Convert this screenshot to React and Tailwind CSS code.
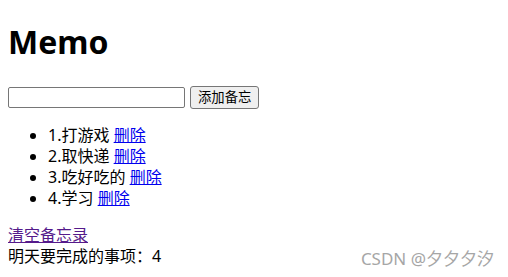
export default function App() {
  const items = ["打游戏", "取快递", "吃好吃的", "学习"];
  return (
    <div className="relative w-[508px] h-[277px] bg-white overflow-hidden px-2 text-[16px] leading-[21px] text-black" style={{ fontFamily: '"Noto Sans", "Noto Sans CJK SC", sans-serif' }}>
      <h1 className="pt-[21px] text-[32px] leading-[42px] font-bold">Memo</h1>
      <div className="mt-[23px] flex items-center gap-[5px] h-[23px]">
        <input className="w-[177px] h-[21px] border border-[#767676] rounded-[2px] outline-none px-1 text-[13px]" />
        <button className="h-[23px] px-[7px] bg-[#efefef] border border-[#767676] rounded-[3px] text-[13.33px] leading-[19px]">添加备忘</button>
      </div>
      <ul className="mt-[16px] list-disc pl-[40px]">
        {items.map((t, i) => (
          <li key={i} className="leading-[21px]">
            {i + 1}.{t} <a href="#" className="text-[#0000ee] underline">删除</a>
          </li>
        ))}
      </ul>
      <div className="mt-[16px]">
        <a href="#" className="text-[#551a8b] underline">清空备忘录</a>
      </div>
      <div>明天要完成的事项：4</div>
      <div className="absolute right-[14px] top-[248px] text-[17px] leading-[22px] text-[#a6a6a6]">CSDN @夕夕夕汐</div>
    </div>
  );
}
